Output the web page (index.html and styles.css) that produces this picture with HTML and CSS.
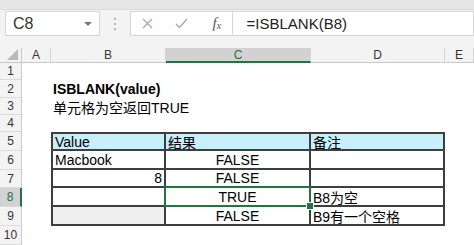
FILE: index.html
```html
<!DOCTYPE html>
<html lang="zh">
<head>
    <meta charset="UTF-8">
    <meta name="viewport" content="width=device-width, initial-scale=1.0">
    <title>ISBLANK</title>
    <link rel="stylesheet" href="styles.css">
</head>
<body>

    <!-- Bagian atas: kotak nama dan bar rumus -->
    <div class="ribbon-edge"></div>
    <div class="formula-bar">
        <div class="name-box">
            <span>C8</span>
            <span class="drop"></span>
        </div>
        <div class="grip"><i></i><i></i><i></i></div>
        <div class="formula-box">
            <div class="fx-buttons">
                <svg class="ic" width="11" height="11" viewBox="0 0 11 11">
                    <path d="M1 1 L10 10 M10 1 L1 10" stroke="#a9a9a9" stroke-width="1.3" fill="none"/>
                </svg>
                <svg class="ic" width="13" height="11" viewBox="0 0 13 11">
                    <path d="M1 6 L4.5 9.5 L12 1" stroke="#a9a9a9" stroke-width="1.4" fill="none"/>
                </svg>
                <span class="fx">f<sub>x</sub></span>
            </div>
            <div class="formula-text">=ISBLANK(B8)</div>
        </div>
    </div>

    <!-- Lembar kerja -->
    <div class="sheet">
        <div class="corner"><span class="tri"></span></div>
        <div class="ch">A</div>
        <div class="ch">B</div>
        <div class="ch active">C</div>
        <div class="ch">D</div>
        <div class="ch">E</div>

        <div class="rh">1</div>
        <div class="cell"></div><div class="cell"></div><div class="cell"></div><div class="cell"></div><div class="cell"></div>

        <div class="rh">2</div>
        <div class="cell"></div>
        <div class="cell title">ISBLANK(value)</div>
        <div class="cell"></div><div class="cell"></div><div class="cell"></div>

        <div class="rh">3</div>
        <div class="cell"></div>
        <div class="cell overflow">单元格为空返回TRUE</div>
        <div class="cell"></div><div class="cell"></div><div class="cell"></div>

        <div class="rh">4</div>
        <div class="cell"></div><div class="cell"></div><div class="cell"></div><div class="cell"></div><div class="cell"></div>

        <div class="rh">5</div>
        <div class="cell"></div>
        <div class="cell t top first head">Value</div>
        <div class="cell t top head">结果</div>
        <div class="cell t top head">备注</div>
        <div class="cell"></div>

        <div class="rh">6</div>
        <div class="cell"></div>
        <div class="cell t first">Macbook</div>
        <div class="cell t mid">FALSE</div>
        <div class="cell t"></div>
        <div class="cell"></div>

        <div class="rh">7</div>
        <div class="cell"></div>
        <div class="cell t first num">8</div>
        <div class="cell t mid">FALSE</div>
        <div class="cell t"></div>
        <div class="cell"></div>

        <div class="rh active">8</div>
        <div class="cell"></div>
        <div class="cell t first"></div>
        <div class="cell t mid sel">TRUE</div>
        <div class="cell t">B8为空</div>
        <div class="cell"></div>

        <div class="rh">9</div>
        <div class="cell"></div>
        <div class="cell t first grey"></div>
        <div class="cell t mid">FALSE</div>
        <div class="cell t">B9有一个空格</div>
        <div class="cell"></div>

        <div class="rh">10</div>
        <div class="cell"></div><div class="cell"></div><div class="cell"></div><div class="cell"></div><div class="cell"></div>
    </div>

</body>
</html>
```

FILE: styles.css
```css
/* Gaya umum */
* {
    margin: 0;
    padding: 0;
    box-sizing: border-box;
}

body {
    width: 474px;
    height: 245px;
    overflow: hidden;
    background: #fff;
    font-family: 'Liberation Sans', 'Noto Sans CJK SC', sans-serif;
}

/* Bar rumus */
.ribbon-edge {
    height: 10px;
    background: #e6e6e6;
    border-bottom: 1px solid #dadada;
}

.formula-bar {
    height: 38px;
    background: #f3f3f3;
    display: flex;
    align-items: flex-start;
    padding-top: 1px;
}

.name-box {
    width: 95px;
    height: 25px;
    margin-left: 5px;
    background: #fff;
    border: 1px solid #d6d6d6;
    display: flex;
    align-items: center;
    justify-content: space-between;
    padding: 0 7px 0 7px;
    font-size: 16px;
    color: #333;
}

.drop {
    width: 0;
    height: 0;
    border-left: 4px solid transparent;
    border-right: 4px solid transparent;
    border-top: 4px solid #777;
}

.grip {
    width: 30px;
    height: 25px;
    display: flex;
    flex-direction: column;
    align-items: center;
    justify-content: center;
    gap: 3px;
}

.grip i {
    width: 2px;
    height: 2px;
    background: #b8b8b8;
}

.formula-box {
    width: 346px;
    height: 25px;
    background: #fff;
    border: 1px solid #d6d6d6;
    display: flex;
}

.fx-buttons {
    width: 102px;
    border-right: 1px solid #d6d6d6;
    display: flex;
    align-items: center;
    padding-left: 11px;
    gap: 22px;
}

.fx {
    font-family: 'Liberation Serif', serif;
    font-style: italic;
    font-size: 15px;
    color: #555;
    margin-left: 3px;
}

.fx sub {
    font-size: 10px;
    vertical-align: -1px;
}

.formula-text {
    padding-left: 14px;
    font-size: 15px;
    line-height: 23px;
    color: #222;
}

/* Lembar kerja */
.sheet {
    display: grid;
    grid-template-columns: 22px 29px 115px 145px 134px 29px;
    grid-template-rows: 15px 17px 18px 17px 17px 19px 19px 18px 19px 19px 19px;
}

.corner {
    background: #f3f3f3;
    border-right: 1px solid #c9c9c9;
    border-bottom: 1px solid #c9c9c9;
    position: relative;
}

.tri {
    position: absolute;
    right: 3px;
    bottom: 2px;
    width: 0;
    height: 0;
    border-left: 11px solid transparent;
    border-bottom: 11px solid #b9b9b9;
}

.ch {
    background: #f3f3f3;
    border-right: 1px solid #d4d4d4;
    border-bottom: 1px solid #c9c9c9;
    font-size: 12px;
    color: #333;
    text-align: center;
    line-height: 14px;
}

.ch.active {
    background: #d2d2d2;
    border-bottom: 2px solid #217346;
    color: #217346;
}

.rh {
    background: #f3f3f3;
    border-right: 1px solid #c9c9c9;
    border-bottom: 1px solid #dcdcdc;
    font-size: 12px;
    color: #333;
    display: flex;
    align-items: center;
    justify-content: center;
}

.rh.active {
    background: #d2d2d2;
    border-right: 2px solid #217346;
    color: #217346;
}

.cell {
    font-size: 14px;
    color: #000;
    display: flex;
    align-items: center;
    padding: 0 2px;
    white-space: nowrap;
}

.title {
    font-weight: bold;
    font-size: 14px;
    padding-left: 2px;
}

/* Tabel dengan garis */
.t {
    border-right: 2px solid #3e3e3e;
    border-bottom: 2px solid #3e3e3e;
}

.t.top {
    border-top: 2px solid #3e3e3e;
}

.t.first {
    border-left: 2px solid #3e3e3e;
}

.head {
    background: #c9eefc;
}

.mid {
    justify-content: center;
}

.num {
    justify-content: flex-end;
}

.grey {
    background: #efefef;
}

/* Sel yang dipilih */
.sel {
    position: relative;
}

.sel::after {
    content: '';
    position: absolute;
    left: -2px;
    top: -2px;
    right: -2px;
    bottom: -2px;
    border: 2px solid #217346;
}

.sel::before {
    content: '';
    position: absolute;
    right: -5px;
    bottom: -5px;
    width: 6px;
    height: 6px;
    background: #217346;
    border: 1px solid #fff;
    z-index: 1;
}
```
